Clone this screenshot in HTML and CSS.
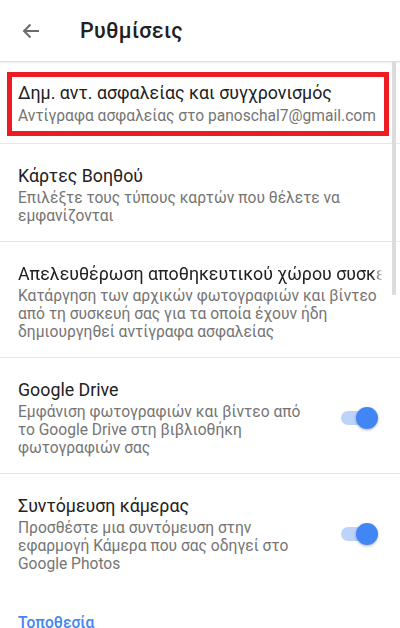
FILE: index.html
```html
<!DOCTYPE html>
<html lang="el">
<head>
    <meta charset="UTF-8">
    <meta name="viewport" content="width=device-width, initial-scale=1.0">
    <title>Ρυθμίσεις</title>
    <link rel="stylesheet" href="styles.css">
</head>
<body>
    <div id="app">
        <div class="toolbar">
            <div class="back">
                <svg width="18" height="16" viewBox="0 0 18 16">
                    <path d="M17 8H2M8.5 1.5L2 8l6.5 6.5" fill="none" stroke="#6b6b6b" stroke-width="2"/>
                </svg>
            </div>
            <div class="toolbar-title">Ρυθμίσεις</div>
        </div>

        <div class="settings">
            <div class="item item-first">
                <div class="highlight">
                    <div class="item-title">Δημ. αντ. ασφαλείας και συγχρονισμός</div>
                    <div class="item-sub">Αντίγραφα ασφαλείας στο panoschal7@gmail.com</div>
                </div>
            </div>
            <div class="item">
                <div class="item-text">
                    <div class="item-title">Κάρτες Βοηθού</div>
                    <div class="item-sub">Επιλέξτε τους τύπους καρτών που θέλετε να εμφανίζονται</div>
                </div>
            </div>
            <div class="item">
                <div class="item-text">
                    <div class="item-title fade">Απελευθέρωση αποθηκευτικού χώρου συσκευής</div>
                    <div class="item-sub">Κατάργηση των αρχικών φωτογραφιών και βίντεο από τη συσκευή σας για τα οποία έχουν ήδη δημιουργηθεί αντίγραφα ασφαλείας</div>
                </div>
            </div>
            <div class="item">
                <div class="item-text narrow">
                    <div class="item-title">Google Drive</div>
                    <div class="item-sub">Εμφάνιση φωτογραφιών και βίντεο από το Google Drive στη βιβλιοθήκη φωτογραφιών σας</div>
                </div>
                <div class="switch on"><div class="thumb"></div></div>
            </div>
            <div class="item no-line">
                <div class="item-text narrow">
                    <div class="item-title">Συντόμευση κάμερας</div>
                    <div class="item-sub">Προσθέστε μια συντόμευση στην εφαρμογή Κάμερα που σας οδηγεί στο Google Photos</div>
                </div>
                <div class="switch on"><div class="thumb"></div></div>
            </div>
            <div class="section">Τοποθεσία</div>
        </div>

        <div class="scrollbar"></div>
    </div>
</body>
</html>
```

FILE: styles.css
```css
body {
    margin: 0;
    font-family: Roboto, "Noto Sans", sans-serif;
    background-color: #fff;
    color: #212121;
}
#app {
    position: relative;
    width: 400px;
    height: 628px;
    overflow: hidden;
}
.toolbar {
    display: flex;
    align-items: center;
    height: 61px;
    border-bottom: 1px solid #dedede;
    box-shadow: 0 1px 2px rgba(0, 0, 0, 0.08);
}
.back {
    display: flex;
    width: 18px;
    height: 16px;
    margin-left: 22px;
    margin-top: 1px;
}
.toolbar-title {
    margin-left: 40px;
    font-size: 21.5px;
    font-weight: 500;
    letter-spacing: 0.3px;
}
.item {
    display: flex;
    align-items: center;
    padding: 21px 18px 16px 18px;
    border-bottom: 1px solid #e8e8e8;
}
.item.no-line {
    border-bottom: none;
}
.item-first {
    padding: 10px 11px 7px 7px;
}
.highlight {
    flex: 1;
    border: 5px solid #ed1c24;
    padding: 5px 6px 6px 6px;
}
.item-text {
    flex: 1;
    min-width: 0;
}
.item-text.narrow {
    flex: none;
    width: 300px;
    margin-right: 23px;
}
.item-title {
    font-size: 17.8px;
    line-height: 22px;
    color: #212121;
    white-space: nowrap;
}
.item-text .item-sub {
    margin-top: 2px;
}
.item-first .item-sub {
    margin-top: 3px;
}
.fade {
    overflow: hidden;
    -webkit-mask-image: linear-gradient(to right, #000 354px, transparent 366px);
    mask-image: linear-gradient(to right, #000 354px, transparent 366px);
}
.item-sub {
    font-size: 15.6px;
    line-height: 18px;
    color: #757575;
}
.switch {
    position: relative;
    width: 34px;
    height: 14px;
    border-radius: 7px;
    background-color: #bcd3fa;
}
.thumb {
    position: absolute;
    top: -4px;
    left: 15px;
    width: 22px;
    height: 22px;
    border-radius: 50%;
    background-color: #4285f4;
    box-shadow: 0 1px 3px rgba(0, 0, 0, 0.3);
}
.section {
    padding: 24px 18px 0 18px;
    font-size: 15.6px;
    line-height: 20px;
    font-weight: 500;
    color: #4285f4;
}
.scrollbar {
    position: absolute;
    top: 62px;
    right: 4px;
    width: 4px;
    height: 233px;
    background-color: #dcdcdc;
}
```
